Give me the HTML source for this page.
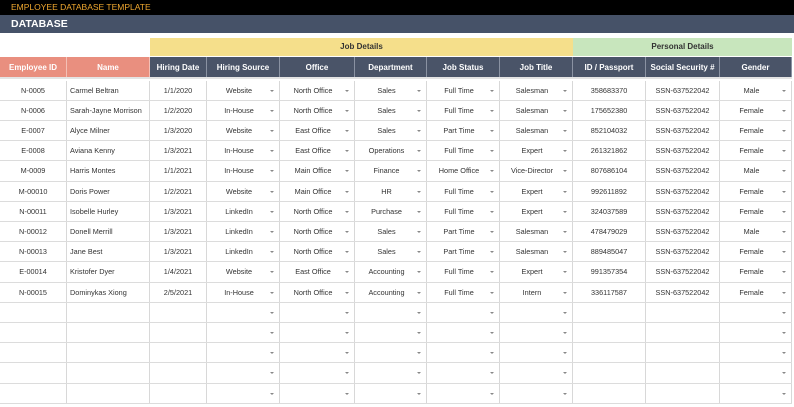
<!DOCTYPE html>
<html><head><meta charset="utf-8">
<style>
*{margin:0;padding:0;box-sizing:border-box}
body{width:794px;height:407px;overflow:hidden;background:#fff;font-family:"Liberation Sans",sans-serif;position:relative}
.t1{position:absolute;left:0;top:0;width:794px;height:15px;background:#000;color:#f0a830;font-size:8.5px;line-height:15px;padding-left:11px}
.t2{position:absolute;left:0;top:15px;width:794px;height:18px;background:#465268;color:#fff;font-size:10.5px;font-weight:bold;line-height:18px;padding-left:11px}
.g{position:absolute;top:38px;height:18px;font-size:8px;font-weight:bold;text-align:center;line-height:18px;color:#333}
.row{position:absolute;left:0;display:flex;height:20.2px;border-bottom:1px solid #dcdcdc}
.row div{position:relative;border-right:1px solid #d8d8d8;font-size:7.3px;color:#333;text-align:center;line-height:20px;white-space:nowrap;overflow:hidden}
.row div.l{text-align:left;padding-left:3px}
.row div.d{padding-right:8px}
.row div.d::after{content:"";position:absolute;right:5px;top:9px;border-left:2px solid transparent;border-right:2px solid transparent;border-top:2px solid #888}
.hdr{top:57px;height:22px;border-bottom:2px solid #e4e4e4}
.hdr div{color:#fff;font-weight:bold;font-size:8px;line-height:22px;background:#4a5468;border-right:1px solid #8a92a2}
.hdr div.s{background:#e98f7f;border-right:1px solid #f4c0b6}
</style></head><body>
<div class="t1">EMPLOYEE DATABASE TEMPLATE</div>
<div class="t2">DATABASE</div>
<div class="g" style="left:150px;width:423px;background:#f5df8b">Job Details</div>
<div class="g" style="left:573px;width:219px;background:#c8e6bd">Personal Details</div>
<div id="rows"></div>
<script>
var w=[67,83,57,73,75,72,73,73,73,74,72];
var dd=[0,0,0,1,1,1,1,1,0,0,1];
var H=["Employee ID","Name","Hiring Date","Hiring Source","Office","Department","Job Status","Job Title","ID / Passport","Social Security #","Gender"];
var D=[
["N-0005","Carmel Beltran","1/1/2020","Website","North Office","Sales","Full Time","Salesman","358683370","SSN-637522042","Male"],
["N-0006","Sarah-Jayne Morrison","1/2/2020","In-House","North Office","Sales","Full Time","Salesman","175652380","SSN-637522042","Female"],
["E-0007","Alyce Milner","1/3/2020","Website","East Office","Sales","Part Time","Salesman","852104032","SSN-637522042","Female"],
["E-0008","Aviana Kenny","1/3/2021","In-House","East Office","Operations","Full Time","Expert","261321862","SSN-637522042","Female"],
["M-0009","Harris Montes","1/1/2021","In-House","Main Office","Finance","Home Office","Vice-Director","807686104","SSN-637522042","Male"],
["M-00010","Doris Power","1/2/2021","Website","Main Office","HR","Full Time","Expert","992611892","SSN-637522042","Female"],
["N-00011","Isobelle Hurley","1/3/2021","LinkedIn","North Office","Purchase","Full Time","Expert","324037589","SSN-637522042","Female"],
["N-00012","Donell Merrill","1/3/2021","LinkedIn","North Office","Sales","Part Time","Salesman","478479029","SSN-637522042","Male"],
["N-00013","Jane Best","1/3/2021","LinkedIn","North Office","Sales","Part Time","Salesman","889485047","SSN-637522042","Female"],
["E-00014","Kristofer Dyer","1/4/2021","Website","East Office","Accounting","Full Time","Expert","991357354","SSN-637522042","Female"],
["N-00015","Dominykas Xiong","2/5/2021","In-House","North Office","Accounting","Full Time","Intern","336117587","SSN-637522042","Female"]];
for(var i=0;i<5;i++)D.push(["","","","","","","","","","",""]);
var h='<div class="row hdr">';
H.forEach(function(t,j){h+='<div class="'+(j<2?'s':'')+'" style="width:'+w[j]+'px">'+t+'</div>'});
h+='</div>';
D.forEach(function(r,i){
 h+='<div class="row" style="top:'+(80.6+i*20.2)+'px">';
 r.forEach(function(t,j){var c=(j==1?'l ':'')+(dd[j]?'d':'');h+='<div class="'+c+'" style="width:'+w[j]+'px">'+t+'</div>'});
 h+='</div>';
});
document.getElementById('rows').innerHTML=h;
</script>
</body></html>
